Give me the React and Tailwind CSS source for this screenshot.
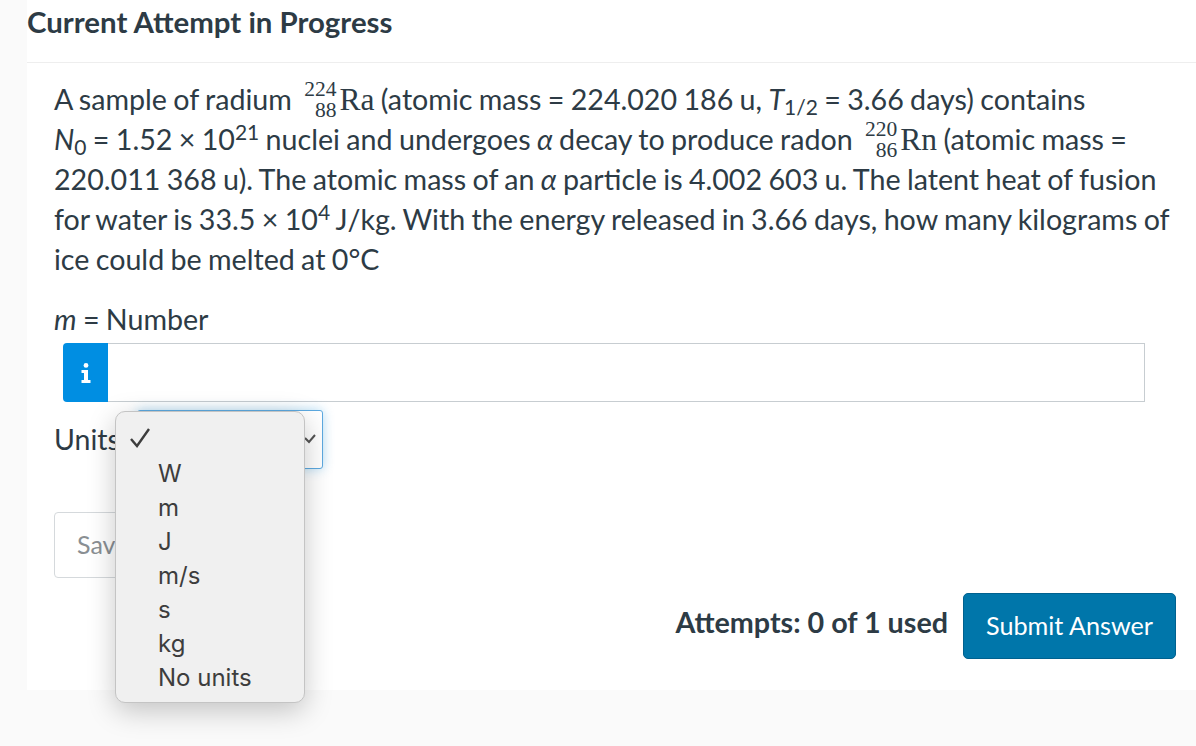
import React from 'react';

const units = ['W', 'm', 'J', 'm/s', 's', 'kg', 'No units'];

function Nuclide({ mass, atomic, symbol }) {
  return (
    <span className="font-['Liberation_Serif',serif] text-[31.5px] [word-spacing:0]">
      <span className="inline-block align-[-7px] text-right text-[21.5px] leading-[21px] ml-[6px] mr-[3px]">
        <span className="block">{mass}</span>
        <span className="block">{atomic}</span>
      </span>
      {symbol}
    </span>
  );
}

function UnitsMenu() {
  return (
    <div className="absolute left-[115px] top-[411px] w-[190px] h-[292px] rounded-[10px] bg-[#f0f0f0] border border-[#c4c4c4] shadow-[0_8px_28px_rgba(0,0,0,0.22)] font-['Inter',sans-serif] text-[#3d3d3d] text-[24px]">
      <div className="h-[45px] pl-[12px] pt-[15px]">
        <svg width="24" height="22" viewBox="0 0 24 22" fill="none" stroke="#3d3d3d" strokeWidth="2.4">
          <path d="M3 12 L9 19 L21 2" />
        </svg>
      </div>
      <ul className="pl-[42px]">
        {units.map((unit) => (
          <li key={unit} className="h-[34px] leading-[34px]">{unit}</li>
        ))}
      </ul>
    </div>
  );
}

export default function App() {
  return (
    <div className="relative h-[746px] w-[1196px] overflow-hidden bg-[#fafafa] font-['Lato',sans-serif] text-[#2d3b45]">
      <div className="ml-[27px] h-[690px] bg-white flex flex-col">
        <div className="h-[63px] border-b border-[#eeeeee] pt-[2px]">
          <h1 className="text-[29.4px] font-bold leading-[40px]">Current Attempt in Progress</h1>
        </div>

        <div className="px-[27px] pt-[16px] text-[28.65px] leading-[40px] [word-spacing:-1px] whitespace-nowrap">
          <p className="h-[40px]">
            A sample of radium <Nuclide mass="224" atomic="88" symbol="Ra" /> (atomic mass = 224.020 186 u, <i>T</i><sub className="text-[21px]">1/2</sub> = 3.66 days) contains
          </p>
          <p className="h-[40px]">
            <i>N</i><sub className="text-[21px]">0</sub> = 1.52 × 10<sup className="text-[21px]">21</sup> nuclei and undergoes <i>α</i> decay to produce radon <Nuclide mass="220" atomic="86" symbol="Rn" /> (atomic mass =
          </p>
          <p className="h-[40px]">220.011 368 u). The atomic mass of an <i>α</i> particle is 4.002 603 u. The latent heat of fusion</p>
          <p className="h-[40px]">for water is 33.5 × 10<sup className="text-[21px]">4</sup> J/kg. With the energy released in 3.66 days, how many kilograms of</p>
          <p className="h-[40px]">ice could be melted at 0°C</p>
          <p className="h-[40px] mt-[20px]"><i>m</i> = Number</p>
        </div>

        <div className="ml-[36px] mt-[4px] w-[1082px] h-[59px] flex">
          <div className="w-[45px] rounded-l-[4px] bg-[#008ee2] flex items-center justify-center">
            <svg width="10" height="20" viewBox="0 0 10 20" fill="#ffffff">
              <circle cx="5" cy="2.4" r="2.4" />
              <path d="M0.5 7 H7 V17 H9.5 V20 H0.5 V17 H3 V10 H0.5 Z" />
            </svg>
          </div>
          <div className="flex-1 bg-white border border-[#c7cdd1] border-l-0"></div>
        </div>

        <div className="ml-[27px] mt-[8px] h-[58px] flex items-center text-[28.5px]">
          <span>Units</span>
          <div className="w-[186px] h-[59px] ml-[17px] rounded-[3px] border border-[#5da9e0] bg-white shadow-[0_0_12px_rgba(0,142,226,0.3)] flex items-center justify-end pr-[6px]">
            <svg width="12" height="10" viewBox="0 0 12 10" fill="none" stroke="#555555" strokeWidth="2">
              <path d="M1 4 L5 8 L11 1" />
            </svg>
          </div>
        </div>

        <div className="ml-[27px] mt-[44px] w-[120px] h-[66px] rounded-[4px] border border-[#d5d9dc] pl-[22px] flex items-center text-[#8a8f93] text-[25px]">
          Save
        </div>

        <div className="mt-[15px] pr-[20px] flex items-center justify-end gap-[15px]">
          <span className="text-[28.7px] font-bold mb-[7px]">Attempts: 0 of 1 used</span>
          <button className="w-[213px] h-[66px] rounded-[5px] border border-[#00618f] bg-[#0076aa] text-white text-[25.2px]">Submit Answer</button>
        </div>
      </div>

      <UnitsMenu />
    </div>
  );
}
